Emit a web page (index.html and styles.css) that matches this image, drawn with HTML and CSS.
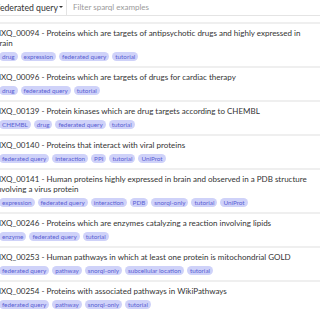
FILE: index.html
```html
<!DOCTYPE html>
<html>
<head>
<meta charset="utf-8">
<link rel="stylesheet" href="styles.css">
</head>
<body>
<div class="page">
  <div class="toolbar">
    <div class="dropdown">federated query<span class="caret"></span></div>
    <div class="filter">Filter sparql examples</div>
  </div>
  <ul class="list">
    <li class="item">
      <div class="title">NXQ_00094 - Proteins which are targets of antipsychotic drugs and highly expressed in brain</div>
      <div class="tags"><span class="tag">drug</span><span class="tag">expression</span><span class="tag">federated query</span><span class="tag">tutorial</span></div>
    </li>
    <li class="item">
      <div class="title">NXQ_00096 - Proteins which are targets of drugs for cardiac therapy</div>
      <div class="tags"><span class="tag">drug</span><span class="tag">federated query</span><span class="tag">tutorial</span></div>
    </li>
    <li class="item">
      <div class="title">NXQ_00139 - Protein kinases which are drug targets according to CHEMBL</div>
      <div class="tags"><span class="tag">CHEMBL</span><span class="tag">drug</span><span class="tag">federated query</span><span class="tag">tutorial</span></div>
    </li>
    <li class="item">
      <div class="title">NXQ_00140 - Proteins that interact with viral proteins</div>
      <div class="tags"><span class="tag">federated query</span><span class="tag">interaction</span><span class="tag">PPI</span><span class="tag">tutorial</span><span class="tag">UniProt</span></div>
    </li>
    <li class="item">
      <div class="title">NXQ_00141 - Human proteins highly expressed in brain and observed in a PDB structure involving a virus protein</div>
      <div class="tags"><span class="tag">expression</span><span class="tag">federated query</span><span class="tag">interaction</span><span class="tag">PDB</span><span class="tag">snorql-only</span><span class="tag">tutorial</span><span class="tag">UniProt</span></div>
    </li>
    <li class="item">
      <div class="title">NXQ_00246 - Proteins which are enzymes catalyzing a reaction involving lipids</div>
      <div class="tags"><span class="tag">enzyme</span><span class="tag">federated query</span><span class="tag">tutorial</span></div>
    </li>
    <li class="item">
      <div class="title">NXQ_00253 - Human pathways in which at least one protein is mitochondrial GOLD</div>
      <div class="tags"><span class="tag">federated query</span><span class="tag">pathway</span><span class="tag">snorql-only</span><span class="tag">subcellular location</span><span class="tag">tutorial</span></div>
    </li>
    <li class="item">
      <div class="title">NXQ_00254 - Proteins with associated pathways in WikiPathways</div>
      <div class="tags"><span class="tag">federated query</span><span class="tag">pathway</span><span class="tag">snorql-only</span><span class="tag">tutorial</span></div>
    </li>
  </ul>
</div>
</body>
</html>
```

FILE: styles.css
```css
html, body {
  margin: 0;
  padding: 0;
  background: #fff;
  overflow: hidden;
}
body {
  font-family: Lato, "Liberation Sans", sans-serif;
  color: #333;
}
.page {
  margin-left: -5px;
  width: 325px;
}
.toolbar {
  display: flex;
  align-items: center;
  height: 15px;
  border-bottom: 1px solid #e4e4e4;
}
.dropdown {
  font-size: 8.7px;
  color: #333;
  padding: 0 3px 1px 2px;
  height: 14px;
  border-right: 1px solid #e4e4e4;
  display: flex;
  align-items: center;
}
.caret {
  display: inline-block;
  width: 0;
  height: 0;
  margin-left: 1px;
  border-left: 2px solid transparent;
  border-right: 2px solid transparent;
  border-top: 2.5px solid #333;
}
.filter {
  font-size: 8px;
  color: #9a9a9a;
  padding: 0 0 1px 6px;
}
.list {
  list-style: none;
  margin: 0;
  padding: 0;
  border-top: 6px solid #fff;
}
.item {
  padding: 4px 0 5px 0;
  border-top: 2px solid #efefef;
}
.title {
  font-size: 8px;
  line-height: 10px;
  padding-right: 4px;
}
.tags {
  display: flex;
  gap: 3px;
  margin-top: 4px;
  margin-left: 4px;
}
.tag {
  font-size: 6.3px;
  line-height: 9px;
  padding: 0 3px;
  border-radius: 5px;
  background: #cfd2f9;
  color: #5a61d3;
  white-space: nowrap;
}
```
